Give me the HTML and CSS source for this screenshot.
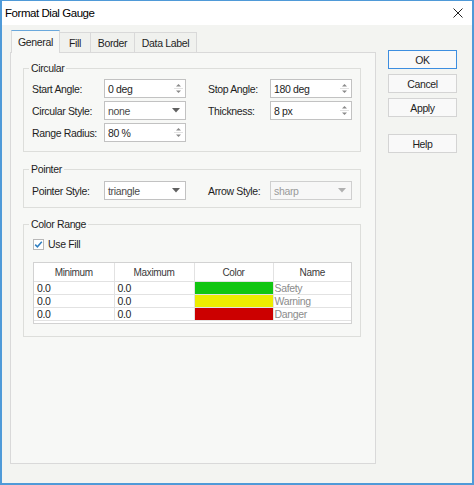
FILE: index.html
```html
<!DOCTYPE html>
<html>
<head>
<meta charset="utf-8">
<link rel="stylesheet" href="styles.css">
</head>
<body>
<div class="window">
  <div class="titlebar">
    <span class="title">Format Dial Gauge</span>
    <svg class="close" width="10" height="10" viewBox="0 0 10 10"><path d="M0.5 0.5L9.5 9.5M9.5 0.5L0.5 9.5" stroke="#222" stroke-width="1" fill="none"/></svg>
  </div>
  <div class="content">
    <div class="main">
      <div class="tabs">
        <div class="tab active t-general">General</div>
        <div class="tab t-fill">Fill</div>
        <div class="tab t-border">Border</div>
        <div class="tab t-label">Data Label</div>
      </div>
      <div class="panel">
        <fieldset class="group g-circular">
          <legend>Circular</legend>
          <div class="form">
            <span class="lbl">Start Angle:</span>
            <div class="field"><span class="val">0 deg</span><span class="spin"><svg width="11" height="15" viewBox="0 0 11 15"><path d="M3 5.5L5.5 3L8 5.5Z" fill="#8a8a8a"/><path d="M1 7.5H10" stroke="#e2e2e2"/><path d="M3 9.5L5.5 12L8 9.5Z" fill="#8a8a8a"/></svg></span></div>
            <span class="lbl lbl2">Stop Angle:</span>
            <div class="field"><span class="val">180 deg</span><span class="spin"><svg width="11" height="15" viewBox="0 0 11 15"><path d="M3 5.5L5.5 3L8 5.5Z" fill="#8a8a8a"/><path d="M1 7.5H10" stroke="#e2e2e2"/><path d="M3 9.5L5.5 12L8 9.5Z" fill="#8a8a8a"/></svg></span></div>

            <span class="lbl">Circular Style:</span>
            <div class="field select"><span class="val soft">none</span><svg class="arrow" width="8" height="5" viewBox="0 0 8 5"><path d="M0 0H8L4 4.5Z" fill="#606060"/></svg></div>
            <span class="lbl lbl2">Thickness:</span>
            <div class="field"><span class="val">8 px</span><span class="spin"><svg width="11" height="15" viewBox="0 0 11 15"><path d="M3 5.5L5.5 3L8 5.5Z" fill="#8a8a8a"/><path d="M1 7.5H10" stroke="#e2e2e2"/><path d="M3 9.5L5.5 12L8 9.5Z" fill="#8a8a8a"/></svg></span></div>

            <span class="lbl">Range Radius:</span>
            <div class="field"><span class="val">80 %</span><span class="spin"><svg width="11" height="15" viewBox="0 0 11 15"><path d="M3 5.5L5.5 3L8 5.5Z" fill="#8a8a8a"/><path d="M1 7.5H10" stroke="#e2e2e2"/><path d="M3 9.5L5.5 12L8 9.5Z" fill="#8a8a8a"/></svg></span></div>
          </div>
        </fieldset>

        <fieldset class="group g-pointer">
          <legend>Pointer</legend>
          <div class="form">
            <span class="lbl">Pointer Style:</span>
            <div class="field select"><span class="val soft">triangle</span><svg class="arrow" width="8" height="5" viewBox="0 0 8 5"><path d="M0 0H8L4 4.5Z" fill="#606060"/></svg></div>
            <span class="lbl lbl2">Arrow Style:</span>
            <div class="field select disabled"><span class="val">sharp</span><svg class="arrow" width="8" height="5" viewBox="0 0 8 5"><path d="M0 0H8L4 4.5Z" fill="#b0b0b0"/></svg></div>
          </div>
        </fieldset>

        <fieldset class="group g-range">
          <legend>Color Range</legend>
          <div class="check-row">
            <span class="checkbox"><svg width="9" height="9" viewBox="0 0 9 9"><path d="M1.2 4.6L3.4 6.8L7.8 1.8" stroke="#2f7fc0" stroke-width="1.5" fill="none"/></svg></span>
            <span>Use Fill</span>
          </div>
          <div class="grid-wrap">
            <table class="grid">
              <colgroup><col class="c1"><col class="c2"><col class="c3"><col class="c4"></colgroup>
              <thead>
                <tr><th>Minimum</th><th>Maximum</th><th>Color</th><th>Name</th></tr>
              </thead>
              <tbody>
                <tr><td>0.0</td><td>0.0</td><td class="sw green"></td><td class="name">Safety</td></tr>
                <tr><td>0.0</td><td>0.0</td><td class="sw yellow"></td><td class="name">Warning</td></tr>
                <tr><td>0.0</td><td>0.0</td><td class="sw red"></td><td class="name">Danger</td></tr>
              </tbody>
            </table>
          </div>
        </fieldset>
      </div>
    </div>
    <div class="buttons">
      <div class="btn default">OK</div>
      <div class="btn">Cancel</div>
      <div class="btn">Apply</div>
      <div class="btn help">Help</div>
    </div>
  </div>
</div>
</body>
</html>
```

FILE: styles.css
```css
html, body {
  margin: 0;
  padding: 0;
  background: #f3f4f1;
}
body {
  font-family: "Liberation Sans", Arial, sans-serif;
  font-size: 10.5px;
  letter-spacing: -0.35px;
  color: #1e1e1e;
}
.window {
  width: 474px;
  height: 485px;
  box-sizing: border-box;
  border: 2px solid #4f9ad8;
  border-top-width: 1px;
  background: #f3f4f1;
  display: flex;
  flex-direction: column;
}
.titlebar {
  height: 24px;
  flex: none;
  background: #ffffff;
  display: flex;
  align-items: center;
  justify-content: space-between;
  padding: 0 9px 0 3px;
}
.title {
  font-size: 11.5px;
  letter-spacing: -0.45px;
  color: #000;
}
.content {
  display: flex;
  padding: 5px 0 0 8px;
}
.main {
  width: 366px;
  display: flex;
  flex-direction: column;
}
.tabs {
  display: flex;
  align-items: flex-end;
  height: 23px;
  margin-bottom: -1px;
  padding-left: 1px;
  position: relative;
  z-index: 1;
}
.tab {
  box-sizing: border-box;
  height: 21px;
  border: 1px solid #d9d9d9;
  border-left: none;
  background: #f0f1ee;
  display: flex;
  align-items: center;
  justify-content: center;
  color: #1e1e1e;
}
.tab.active {
  height: 23px;
  border-left: 1px solid #d9d9d9;
  border-top: 1px solid #6aa8dc;
  border-bottom: none;
  background: #f7f8f6;
  padding-bottom: 1px;
}
.t-general { width: 49px; }
.t-fill { width: 31px; }
.t-border { width: 44px; }
.t-label { width: 62px; }
.panel {
  box-sizing: border-box;
  height: 412px;
  border: 1px solid #d9d9d9;
  background: #f7f8f6;
  padding: 8px 14px 0 12px;
}
.group {
  margin: 0;
  border: 1px solid #dddedb;
  padding: 4px 8px 9px 8px;
  min-width: 0;
}
.group legend {
  line-height: 14px;
  padding: 0 2px;
  margin-left: -3px;
  color: #1e1e1e;
}
.g-pointer {
  margin-top: 10px;
  padding-top: 5px;
  padding-bottom: 7px;
}
.g-range {
  margin-top: 9px;
  padding-top: 6px;
  padding-bottom: 12px;
}
.form {
  display: grid;
  grid-template-columns: 72px 82px 84px 82px;
  row-gap: 3px;
  align-items: center;
}
.lbl {
  white-space: nowrap;
}
.lbl2 {
  padding-left: 22px;
}
.field {
  box-sizing: border-box;
  height: 19px;
  border: 1px solid #c2c2c2;
  background: #ffffff;
  display: flex;
  align-items: center;
}
.val {
  flex: 1;
  padding-left: 3px;
}
.val.soft {
  color: #4a4a4a;
}
.spin {
  width: 11px;
  height: 15px;
  margin-right: 1px;
  display: flex;
}
.select .arrow {
  margin-right: 5px;
}
.field.disabled {
  border-color: #cfcfcf;
  background: #f7f7f7;
}
.field.disabled .val {
  color: #9a9a9a;
}
.check-row {
  height: 14px;
  display: flex;
  align-items: center;
  gap: 4px;
  padding-left: 1px;
}
.checkbox {
  box-sizing: border-box;
  width: 11px;
  height: 11px;
  border: 1px solid #b8b8b8;
  background: #fff;
  display: flex;
  align-items: center;
  justify-content: center;
}
.grid-wrap {
  margin-top: 11px;
  margin-left: 1px;
  width: 319px;
  box-sizing: border-box;
  border: 1px solid #d2d2d2;
  background: #ffffff;
  padding-bottom: 2px;
}
.grid {
  width: 100%;
  table-layout: fixed;
  border-collapse: collapse;
}
.grid .c1 { width: 80px; }
.grid .c2 { width: 80px; }
.grid .c3 { width: 79px; }
.grid .c4 { width: 78px; }
.grid th {
  height: 18px;
  padding: 0;
  font-weight: normal;
  font-size: 10px;
  color: #3a3a3a;
  border-right: 1px solid #e2e2e2;
  border-bottom: 1px solid #e2e2e2;
}
.grid td {
  height: 12px;
  padding: 0 0 0 3px;
  line-height: 12px;
  font-size: 10.5px;
  border-right: 1px solid #e2e2e2;
  border-bottom: 1px solid #e2e2e2;
}
.grid th:last-child, .grid td:last-child {
  border-right: none;
}
.grid td.name {
  padding-left: 1px;
  color: #8c8c8c;
}
.grid td.sw { padding: 0; }
.green { background: #11c611; }
.yellow { background: #eded00; }
.red { background: #cc0000; }
.buttons {
  margin-left: 12px;
  margin-top: 20px;
  width: 69px;
  display: flex;
  flex-direction: column;
  gap: 5px;
}
.btn {
  box-sizing: border-box;
  height: 19px;
  border: 1px solid #d4d4d4;
  background: #f9f9f9;
  display: flex;
  align-items: center;
  justify-content: center;
  color: #1e1e1e;
}
.btn.default {
  border-color: #3d8ee0;
}
.btn.help {
  margin-top: 12px;
}
```
